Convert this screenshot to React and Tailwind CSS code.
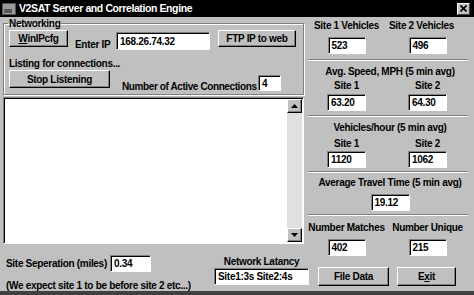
import React from 'react';

const raised =
  'bg-[#c0c0c0] border border-t-white border-l-white border-r-black border-b-black shadow-[inset_-1px_-1px_0_#808080]';
const sunken =
  'bg-white border border-t-[#808080] border-l-[#808080] border-r-white border-b-white shadow-[inset_1px_1px_0_#000]';

const Button = ({ className = '', children }) => (
  <div className={`${raised} flex items-center justify-center ${className}`}>{children}</div>
);

const Field = ({ value, className = '' }) => (
  <div className={`${sunken} flex items-center pl-[3px] ${className}`}>{value}</div>
);

const Separator = () => (
  <div className="ml-[2px] w-[160px] h-[2px] border-t border-t-[#808080] border-b border-b-white" />
);

const PairRow = ({ a, b, className = '' }) => (
  <div className={`grid grid-cols-[81px_81px] ${className}`}>
    <div className="flex justify-center">{a}</div>
    <div className="flex justify-center">{b}</div>
  </div>
);

const ScrollArrow = ({ down }) => (
  <div className={`${raised} w-[15px] h-[14px] flex items-center justify-center`}>
    <svg width="7" height="4" viewBox="0 0 7 4">
      <path d={down ? 'M0 0h7L3.5 4z' : 'M0 4h7L3.5 0z'} fill="#000" />
    </svg>
  </div>
);

const TitleBar = () => (
  <div className="h-[17px] bg-black flex items-center text-white shrink-0">
    <div className="ml-[2px] w-[14px] h-[12px] bg-[#9a9a9a] border border-[#555] flex items-end justify-start p-[1px]">
      <div className="w-[8px] h-[4px] bg-[#5a5a5a]" />
    </div>
    <span className="ml-[3px] text-[10.5px] tracking-[-0.4px]">V2SAT Server and Correlation Engine</span>
    <div className="ml-auto mr-[4px] w-[13px] h-[12px] bg-[#c0c0c0] border border-t-white border-l-white border-r-[#404040] border-b-[#404040] flex items-center justify-center text-black">
      <svg width="7" height="7" viewBox="0 0 7 7">
        <path d="M0.5 0.5L6.5 6.5M6.5 0.5L0.5 6.5" stroke="#000" strokeWidth="1.6" />
      </svg>
    </div>
  </div>
);

export default function App() {
  return (
    <div className="w-[474px] h-[295px] bg-[#c0c0c0] flex flex-col overflow-hidden whitespace-nowrap text-black font-bold text-[10px] tracking-[-0.3px] leading-[11px] font-['Liberation_Sans',Arial,sans-serif]">
      <TitleBar />
      <div className="flex flex-1 min-h-0">
        {/* left column */}
        <div className="w-[306px] pl-[3px] flex flex-col">
          <fieldset className="mt-[1px] w-[301px] h-[78px] border border-[#808080] shadow-[inset_1px_1px_0_#fff,1px_1px_0_#fff] px-[5px]">
            <legend className="ml-[-1px] px-[1px] leading-[11px]">Networking</legend>
            <div className="flex items-start mt-[1px]">
              <Button className="w-[59px] h-[17px]">
                <span><u>W</u>inIPcfg</span>
              </Button>
              <span className="ml-[7px] mt-[9px] w-[41px]">Enter IP</span>
              <Field value="168.26.74.32" className="mt-[2px] w-[94px] h-[18px]" />
              <Button className="ml-[8px] w-[78px] h-[17px]">FTP IP to web</Button>
            </div>
            <div className="mt-[8px]">Listing for connections...</div>
            <div className="flex items-start mt-[1px]">
              <Button className="w-[101px] h-[18px]">Stop Listening</Button>
              <span className="ml-[12px] mt-[11px] w-[136px] tracking-[-0.4px]">Number of Active Connections</span>
              <Field value="4" className="mt-[5px] w-[23px] h-[16px]" />
            </div>
          </fieldset>
          {/* log area */}
          <div className="mt-[2px] w-[301px] h-[150px] flex bg-white border border-t-[#808080] border-l-[#808080] border-r-white border-b-white shadow-[inset_1px_1px_0_#000]">
            <div className="flex-1" />
            <div className="w-[15px] flex flex-col mt-[1px] mb-[1px] mr-[1px] bg-[#e0e0e0]">
              <ScrollArrow />
              <div className="flex-1" />
              <ScrollArrow down />
            </div>
          </div>
          {/* bottom controls */}
          <div className="flex flex-1">
            <div className="flex flex-col pl-[3px]">
              <div className="flex items-center mt-[11px]">
                <span className="w-[104px]">Site Seperation (miles)</span>
                <Field value="0.34" className="w-[41px] h-[17px]" />
              </div>
              <div className="mt-[8px]">(We expect site 1 to be before site 2 etc...)</div>
            </div>
            <div className="ml-auto mr-[-3px] flex flex-col items-center mt-[12px]">
              <span>Network Latancy</span>
              <Field value="Site1:3s Site2:4s" className="mt-[1px] w-[95px] h-[17px]" />
            </div>
          </div>
        </div>

        {/* right column */}
        <div className="flex-1 flex flex-col pt-[2px]">
          <div className="h-[40px]">
            <PairRow a={<span>Site 1 Vehicles</span>} b={<span className="mr-[12px]">Site 2 Vehicles</span>} className="mt-[1px]" />
            <PairRow a={<Field value="523" className="w-[38px] h-[17px]" />} b={<Field value="496" className="w-[38px] h-[17px]" />} className="mt-[6px]" />
          </div>
          <Separator />
          <div className="h-[54px]">
            <div className="mt-[5px] text-center">Avg. Speed, MPH (5 min avg)</div>
            <PairRow a={<span>Site 1</span>} b={<span>Site 2</span>} className="mt-[3px]" />
            <PairRow a={<Field value="63.20" className="w-[39px] h-[17px]" />} b={<Field value="64.30" className="w-[39px] h-[17px]" />} className="mt-[3px]" />
          </div>
          <Separator />
          <div className="h-[54px]">
            <div className="mt-[5px] text-center">Vehicles/hour (5 min avg)</div>
            <PairRow a={<span>Site 1</span>} b={<span>Site 2</span>} className="mt-[5px]" />
            <PairRow a={<Field value="1120" className="w-[39px] h-[17px]" />} b={<Field value="1062" className="w-[39px] h-[17px]" />} className="mt-[2px]" />
          </div>
          <Separator />
          <div className="h-[41px]">
            <div className="mt-[4px] text-center">Average Travel Time (5 min avg)</div>
            <div className="flex justify-center mt-[6px]">
              <Field value="19.12" className="w-[39px] h-[17px]" />
            </div>
          </div>
          <Separator />
          <div className="h-[51px]">
            <PairRow a={<span>Number Matches</span>} b={<span>Number Unique</span>} className="mt-[6px]" />
            <PairRow a={<Field value="402" className="w-[38px] h-[17px]" />} b={<Field value="215" className="w-[38px] h-[17px]" />} className="mt-[6px]" />
          </div>
          <div className="flex">
            <Button className="ml-[12px] w-[71px] h-[19px]">File Data</Button>
            <Button className="ml-[8px] w-[59px] h-[19px]">
              <span>E<u>x</u>it</span>
            </Button>
          </div>
        </div>
      </div>
      <div className="h-[4px] bg-[#404040] shrink-0" />
    </div>
  );
}
